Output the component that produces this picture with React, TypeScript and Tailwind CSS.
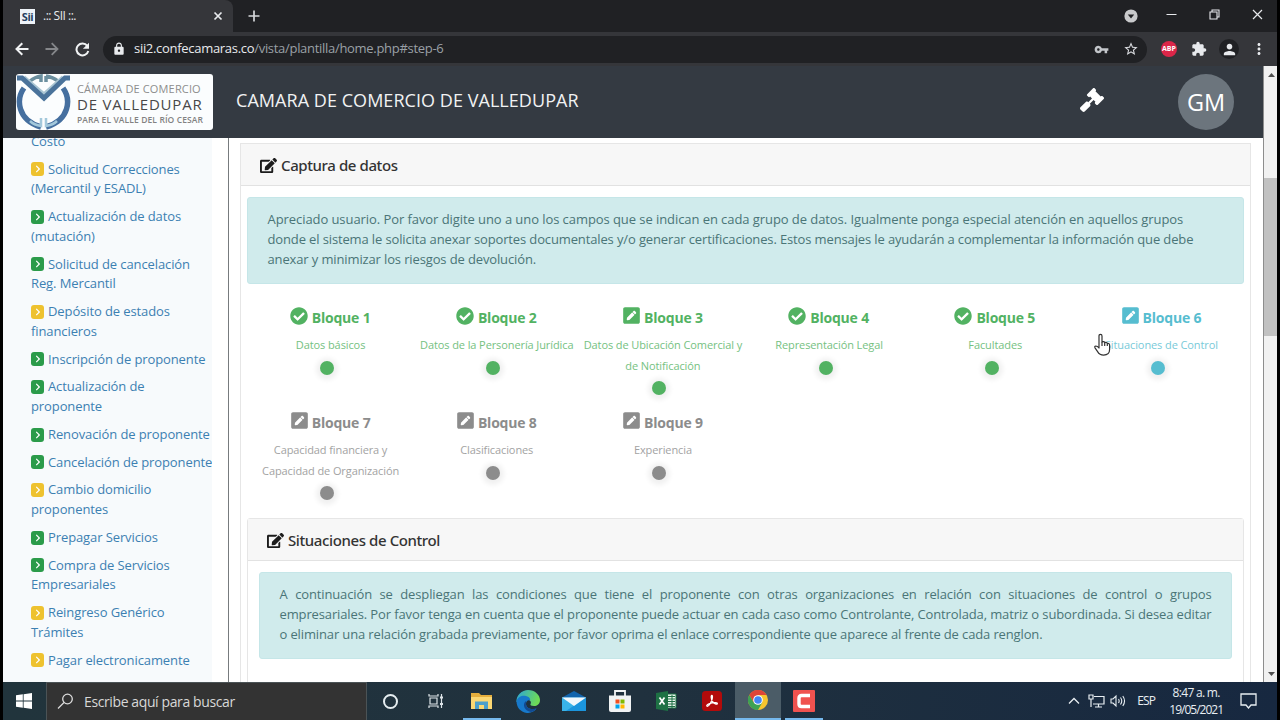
import React from 'react';
import { FaCheckCircle, FaChevronRight, FaEdit, FaGavel, FaPenSquare } from 'react-icons/fa';
import { MdExtension, MdLock, MdPerson, MdStarBorder, MdVpnKey, MdMoreVert } from 'react-icons/md';

const menu = [
  { color: 'bg-[#eec22f]', lines: ['Solicitud Correcciones', '(Mercantil y ESADL)'] },
  { color: 'bg-[#2b9b4a]', lines: ['Actualización de datos', '(mutación)'] },
  { color: 'bg-[#2b9b4a]', lines: ['Solicitud de cancelación', 'Reg. Mercantil'] },
  { color: 'bg-[#eec22f]', lines: ['Depósito de estados', 'financieros'] },
  { color: 'bg-[#2b9b4a]', lines: ['Inscripción de proponente'] },
  { color: 'bg-[#2b9b4a]', lines: ['Actualización de', 'proponente'] },
  { color: 'bg-[#2b9b4a]', lines: ['Renovación de proponente'] },
  { color: 'bg-[#2b9b4a]', lines: ['Cancelación de proponente'] },
  { color: 'bg-[#eec22f]', lines: ['Cambio domicilio', 'proponentes'] },
  { color: 'bg-[#2b9b4a]', lines: ['Prepagar Servicios'] },
  { color: 'bg-[#2b9b4a]', lines: ['Compra de Servicios', 'Empresariales'] },
  { color: 'bg-[#eec22f]', lines: ['Reingreso Genérico', 'Trámites'] },
  { color: 'bg-[#eec22f]', lines: ['Pagar electronicamente'] },
];

const blocks = [
  { n: 1, icon: 'check', tone: 'text-[#52b262]', desc: ['Datos básicos'] },
  { n: 2, icon: 'check', tone: 'text-[#52b262]', desc: ['Datos de la Personería Jurídica'] },
  { n: 3, icon: 'pen', tone: 'text-[#52b262]', desc: ['Datos de Ubicación Comercial y', 'de Notificación'] },
  { n: 4, icon: 'check', tone: 'text-[#52b262]', desc: ['Representación Legal'] },
  { n: 5, icon: 'check', tone: 'text-[#52b262]', desc: ['Facultades'] },
  { n: 6, icon: 'pen', tone: 'text-[#56bdd0]', desc: ['Situaciones de Control'] },
  { n: 7, icon: 'pen', tone: 'text-[#8c8c8c]', desc: ['Capacidad financiera y', 'Capacidad de Organización'] },
  { n: 8, icon: 'pen', tone: 'text-[#8c8c8c]', desc: ['Clasificaciones'] },
  { n: 9, icon: 'pen', tone: 'text-[#8c8c8c]', desc: ['Experiencia'] },
];

function BrowserBar() {
  return (
    <div className="h-[66px] bg-[#202124] text-[#e8eaed]">
      <div className="flex h-8 items-center">
        <div className="flex h-8 w-[230px] items-center rounded-tr-lg bg-[#35363a] pl-[17px] pr-[9px]">
          <div className="flex h-[15px] w-[15px] items-center justify-center bg-[#eef3f8] text-[11px] font-bold leading-none tracking-[-0.5px] text-[#25405e]">Sii</div>
          <span className="ml-2 flex-1 text-[12px] tracking-[-0.5px]">.:: SII ::.</span>
          <svg width="12" height="12" viewBox="0 0 12 12" stroke="#e8eaed" strokeWidth="1.700">
            <path d="M2.500 2.500l7 7M9.500 2.500l-7 7" />
          </svg>
        </div>
        <svg className="ml-[15px]" width="12" height="12" viewBox="0 0 12 12" stroke="#d5d7da" strokeWidth="1.700">
          <path d="M6 .5v11M.5 6h11" />
        </svg>
        <div className="ml-auto flex items-center">
          <svg className="mr-[28px]" width="14" height="14" viewBox="0 0 14 14">
            <circle cx="7" cy="7" r="6.600" fill="#c9cacc" />
            <path d="M3.800 5.400h6.400L7 9.400z" fill="#202124" />
          </svg>
          <svg className="-mt-1 mr-[32px]" width="11" height="11" viewBox="0 0 11 11" stroke="#e8eaed">
            <path d="M.5 5.500h10" />
          </svg>
          <svg className="-mt-1 mr-[32px]" width="11" height="11" viewBox="0 0 11 11" fill="none" stroke="#e8eaed" strokeWidth="1.100">
            <path d="M1 3h7v7H1zM3 3V1h7v7H8" />
          </svg>
          <svg className="-mt-1 mr-[14px]" width="11" height="11" viewBox="0 0 11 11" stroke="#e8eaed" strokeWidth="1.200">
            <path d="M1 1l9 9M10 1l-9 9" />
          </svg>
        </div>
      </div>
      <div className="flex h-[34px] items-center bg-[#35363a]">
        <svg className="ml-[12px]" width="14" height="14" viewBox="0 0 14 14" fill="none" stroke="#f1f3f4" strokeWidth="2">
          <path d="M13.500 7H2M7.300 1.200L1.500 7l5.800 5.800" />
        </svg>
        <svg className="ml-[16px]" width="14" height="14" viewBox="0 0 14 14" fill="none" stroke="#85878a" strokeWidth="1.800">
          <path d="M.5 7H12M6.700 1.200L12.500 7l-5.800 5.800" />
        </svg>
        <svg className="ml-[16px]" width="15" height="15" viewBox="0 0 15 15" fill="none" stroke="#f1f3f4" strokeWidth="2">
          <path d="M12.300 3.800A6 6 0 1 0 13.300 9" /><path d="M14 .7v6.100H7.900z" fill="#f1f3f4" stroke="none" />
        </svg>
        <div className="ml-[13px] flex h-[27px] w-[1044px] items-center rounded-full bg-[#202124] pl-[9px] pr-[8px]">
          <MdLock size={14} />
          <span className="ml-[8px] flex-1 text-[13px] tracking-[-0.3px] text-[#9aa0a6]"><span className="text-[#e8eaed]">sii2.confecamaras.co</span>/vista/plantilla/home.php#step-6</span>
          <MdVpnKey size={15} className="mr-[14px] text-[#c3c6ca]" />
          <MdStarBorder size={16} className="text-[#dadce0]" />
        </div>
        <div className="ml-[14px] flex h-4 w-4 items-center justify-center rounded-full bg-[#dc2649] text-[7px] font-bold text-white">ABP</div>
        <MdExtension className="ml-[14px]" size={16} />
        <div className="ml-[12px] flex h-[20px] w-[20px] items-center justify-center rounded-full bg-[#202124]">
          <MdPerson size={17} />
        </div>
        <MdMoreVert className="ml-[11px]" size={18} />
      </div>
    </div>
  );
}

function Logo() {
  return (
    <div className="flex h-14 w-[197px] overflow-hidden rounded-[3px] bg-[#fbfdfe]">
      <svg width="56" height="56" viewBox="0 0 56 56" fill="none">
        <path d="M8 14C0 25 1 46 25 53M47 14c8 11 7 32-17 39" stroke="#456f9f" strokeWidth="5.500" />
        <path d="M14 7q5-4 11-5v6M30 2q7 1 12 5M30 2v6" stroke="#6b8f9f" strokeWidth="3.500" />
        <path d="M8 3l20 17L47 3" stroke="#a9c5d3" strokeWidth="3.500" />
        <path d="M1 4h5l22 20L49 4h5" stroke="#4a739b" strokeWidth="5" />
        <path d="M25 44v8q-7-1-11-5M30 44v8q7-1 11-5" stroke="#a3c8db" strokeWidth="2.500" />
      </svg>
      <div className="flex flex-1 flex-col whitespace-nowrap pl-[5px] pt-[8px]">
        <div className="text-[11px] leading-[14px] tracking-[0.150px] text-[#8d8d8d]">CÁMARA DE COMERCIO</div>
        <div className="pt-px text-[15px] leading-[15px] tracking-[0.8px] text-[#484848]">DE VALLEDUPAR</div>
        <div className="pt-px text-[8.500px] font-semibold leading-[13px] tracking-[0.1px] text-[#828282]">PARA EL VALLE DEL RÍO CESAR</div>
      </div>
    </div>
  );
}

function Header() {
  return (
    <div className="flex h-[72px] w-[1260px] items-center bg-[#343a42] pl-[13px]">
      <Logo />
      <h1 className="ml-[23px] -mt-1 flex-1 whitespace-nowrap text-[18px] tracking-[0.05px] text-[#f1f2f3]">CAMARA DE COMERCIO DE VALLEDUPAR</h1>
      <FaGavel className="mr-[74px] -mt-1 text-white" size={24} />
      <div className="mr-[29px] flex h-14 w-14 items-center justify-center rounded-full bg-[#6c757d] pt-[2px] text-[23.500px] text-white">GM</div>
    </div>
  );
}

function Sidebar() {
  return (
    <div className="w-[226px] shrink-0 overflow-hidden border-r border-[#777b7e] bg-white">
      <div className="h-full w-[209px] overflow-hidden bg-[#f7fafc] pl-7">
        <ul className="-mt-[6.200px] flex flex-col gap-2 whitespace-nowrap text-[13px] leading-[19.750px] tracking-[-0.1px] text-[#3c80b2]">
          <li>Costo</li>
          {menu.map((m) => (
            <li key={m.lines[0]}>
              <div className="flex items-center">
                <span className={`mr-1 flex h-[14px] w-[13px] shrink-0 items-center justify-center rounded-[3px] ${m.color}`}>
                  <FaChevronRight size={8} className="text-white" />
                </span>
                {m.lines[0]}
              </div>
              {m.lines[1] && <div>{m.lines[1]}</div>}
            </li>
          ))}
        </ul>
      </div>
    </div>
  );
}

function Steps() {
  return (
    <div className="mt-[20px] grid grid-cols-6 whitespace-nowrap">
      {blocks.map((b) => (
        <div key={b.n} className={`flex h-[105px] flex-col items-center ${b.tone}`}>
          <div className="flex h-[27px] items-center text-[14px] font-bold tracking-[-0.2px]">
            {b.icon === 'check' ? <FaCheckCircle size={18} className="-mt-1 mr-1" /> : <FaPenSquare size={19} className="-mt-1 mr-[3px]" />}
            Bloque {b.n}
          </div>
          <div className="pl-px pt-[4px] text-center text-[11px] leading-[20.500px] tracking-[-0.1px] opacity-80">
            {b.desc.map((d) => <div key={d}>{d}</div>)}
          </div>
          <div className="mr-[6px] mt-[5px] h-[14px] w-[14px] rounded-full bg-current shadow-[0_1px_5px_4px_#f1f1f1]" />
        </div>
      ))}
    </div>
  );
}

function CardTitle({ children }: { children: React.ReactNode }) {
  return (
    <div className="flex h-[42px] items-center gap-1 border-b border-[#e2e2e2] bg-[#f7f7f7] pl-[19px] pt-[2px] font-['Noto_Sans',sans-serif] text-[15px] font-medium tracking-[-0.4px] text-[#333]">
      <FaEdit size={17} className="text-[#1c1c1c]" />
      <span>{children}</span>
    </div>
  );
}

function Content() {
  return (
    <div className="relative flex-1 overflow-hidden pl-[11px] pt-[5px]">
      <div className="h-[600px] w-[1011px] border border-[#e6e6e6]">
        <CardTitle>Captura de datos</CardTitle>
        <div className="px-[6px] pt-[11px]">
          <div className="h-[87px] whitespace-nowrap rounded-[3px] border border-[#c5e6e8] bg-[#d0ebec] pl-[19.500px] pt-[12px] text-[13px] leading-[19.750px] tracking-[-0.13px] text-[#4a7577]">
            <div className="tracking-[-0.07px]">Apreciado usuario. Por favor digite uno a uno los campos que se indican en cada grupo de datos. Igualmente ponga especial atención en aquellos grupos</div>
            <div>donde el sistema le solicita anexar soportes documentales y/o generar certificaciones. Estos mensajes le ayudarán a complementar la información que debe</div>
            <div>anexar y minimizar los riesgos de devolución.</div>
          </div>
          <Steps />
          <div className="mt-[4px] h-[300px] rounded-t-[3px] border border-[#e6e6e6]">
            <CardTitle>Situaciones de Control</CardTitle>
            <div className="mx-[11px] mt-[11px] h-[87px] whitespace-nowrap rounded-[3px] border border-[#c5e6e8] bg-[#d0ebec] px-[19.500px] pt-[12px] text-[13px] leading-[19.750px] tracking-[-0.13px] text-[#4a7577]">
              <div className="[text-align-last:justify]">A continuación se despliegan las condiciones que tiene el proponente con otras organizaciones en relación con situaciones de control o grupos</div>
              <div className="[text-align-last:justify]">empresariales. Por favor tenga en cuenta que el proponente puede actuar en cada caso como Controlante, Controlada, matriz o subordinada. Si desea editar</div>
              <div>o eliminar una relación grabada previamente, por favor oprima el enlace correspondiente que aparece al frente de cada renglon.</div>
            </div>
          </div>
        </div>
      </div>
      {/* hand cursor over block 6 */}
      <svg className="absolute left-[864px] top-[195px]" width="20" height="24" viewBox="0 0 20 24" fill="#fff" stroke="#333" strokeWidth="1.200" strokeLinejoin="round">
        <path d="M6 14V3q0-1.700 1.500-1.700T9 3v6q2.300-1 2.700.6 2.200-.7 2.600.9 2.300-.5 2.300 1.600v4.500q0 5.500-6 5.500-4 0-6-3.500L2 14.800q-.8-1.700.8-1.800Q4.500 13 6 15z" />
        <path d="M9 9v4M11.700 9.800V13M14.300 10.700V13" />
      </svg>
    </div>
  );
}

function Scrollbar() {
  return (
    <div className="flex w-[14px] shrink-0 flex-col items-center justify-between border-l border-[#8d8d8d] bg-[#f1f1f1]">
      <svg width="13" height="14" viewBox="0 0 13 14"><path d="M4 11h7L7.500 7z" fill="#505050" /></svg>
      <div className="mb-auto mt-[98px] h-[158px] w-full bg-[#c1c1c1]" />
      <svg width="13" height="14" viewBox="0 0 13 14"><path d="M4 4h7L7.500 8z" fill="#505050" /></svg>
    </div>
  );
}

function Slot({ children, bar }: { children: React.ReactNode; bar?: boolean }) {
  return (
    <div className="relative flex h-full w-[46px] items-center justify-center">
      {children}
      {bar && <div className="absolute bottom-0 h-[2px] w-[38px] bg-[#76b9ed]" />}
    </div>
  );
}

function Taskbar() {
  return (
    <div className="flex h-[38px] items-center bg-linear-to-r from-[#21343c] via-[#20313e] to-[#172840] text-[#e8eef2]">
      <div className="flex h-full w-[43px] items-center justify-center pr-[2px]">
        <svg width="16" height="16" viewBox="0 0 16 16" fill="#fff">
          <path d="M0 2.300l6.800-1v6.300H0zM7.600 1.200L16 0v7.600H7.600zM0 8.400h6.800v6.300L0 13.700zM7.600 8.400H16V16l-8.400-1.200z" />
        </svg>
      </div>
      <div className="flex h-full w-[321px] items-center border-x border-t border-[#4b5356] bg-[#333] pl-[10px]">
        <svg width="17" height="17" viewBox="0 0 17 17" fill="none" stroke="#ddd" strokeWidth="1.300">
          <circle cx="10.500" cy="6" r="4.800" /><path d="M7 9.500L1 15.500" />
        </svg>
        <span className="ml-[10px] text-[14px] tracking-[-0.39px] text-[#d8d8d8]">Escribe aquí para buscar</span>
      </div>
      <Slot><div className="h-[15px] w-[15px] rounded-full border-2 border-[#e5edf0]" /></Slot>
      <Slot>
        <svg width="17" height="16" viewBox="0 0 17 16" fill="none" stroke="#dde4e8" strokeWidth="1.200">
          <path d="M1 1v2h9V1M1 15v-2h9v2M2 5h7v6H2zM13.500 1v14" /><path d="M12 4.500h3M12 11h3" strokeWidth="2" />
        </svg>
      </Slot>
      <Slot bar>
        <svg width="22" height="18" viewBox="0 0 22 18">
          <path d="M0 1h8l2 2h11v14H0z" fill="#e5ae3d" /><path d="M0 5h21v12H0z" fill="#fbd773" />
          <path d="M4 17V9.500h13V17h-4v-4H8v4z" fill="#4c9fcb" />
        </svg>
      </Slot>
      <Slot>
        <svg width="24" height="23" viewBox="0 0 24 23">
          <defs>
            <linearGradient id="edge" x1="0" y1="0" x2="1" y2=".3"><stop stopColor="#2aa4dc" /><stop offset="1" stopColor="#6edb56" /></linearGradient>
          </defs>
          <path d="M.500 12C0 5 6 0 12 0c7 0 12 5 12 10 0 4-3 6-6 6-3 0-4-1-3.500-2 1-1 .5-4-3-4.500C7 9 3 11 .5 12z" fill="url(#edge)" />
          <path d="M.500 11C2 6 7 5 10 6c4 1 4.500 3.500 4 4.500-2-1-4 1-4 3.500 0 4 5 6.500 10.500 4.500C18 22 14 23 11 23 4 22 .5 17 .5 11z" fill="#1779cb" />
          <path d="M10 11c-4 3-2 10 5 11 2-.5 4-1.500 5.500-3.500C15 20 10 18 10 14z" fill="#124a91" />
        </svg>
      </Slot>
      <Slot>
        <svg width="24" height="21" viewBox="0 0 24 21">
          <path d="M0 6.500L12 0l12 6.500V20H0z" fill="#1264ad" />
          <path d="M0 6.500h24V20H0z" fill="#39b3e8" />
          <path d="M24 6.500V20H4z" fill="#1b95dd" /><path d="M0 6.500h24L12 15z" fill="#f2f7fb" />
        </svg>
      </Slot>
      <Slot>
        <svg width="22" height="23" viewBox="0 0 22 23">
          <path d="M6 6V1h10v5" fill="none" stroke="#f1f3f4" strokeWidth="1.800" /><path d="M0 5.500h22V20q0 2-2 2H2q-2 0-2-2z" fill="#f1f3f4" />
          <path d="M6.500 9.500h4v4h-4z" fill="#f25022" /><path d="M11.500 9.500h4v4h-4z" fill="#7fba00" />
          <path d="M6.500 14.500h4v4h-4z" fill="#00a4ef" /><path d="M11.500 14.500h4v4h-4z" fill="#ffb900" />
        </svg>
      </Slot>
      <Slot>
        <svg width="21" height="20" viewBox="0 0 21 20">
          <path d="M10 3h10v14H10z" fill="#e9f3ec" stroke="#1e7144" />
          <path d="M12 5.500h7M12 8h7M12 10.500h7M12 13h7M12 15.500h7M16 4v13" stroke="#1e7144" />
          <path d="M0 2l12-2v20L0 18z" fill="#1e7144" /><path d="M3.500 6.500l5 7M8.500 6.500l-5 7" stroke="#fff" strokeWidth="1.700" />
        </svg>
      </Slot>
      <Slot>
        <svg width="20" height="20" viewBox="0 0 20 20">
          <rect width="20" height="20" rx="3.500" fill="#b30b0b" />
          <path d="M9.800 4.500c1.200 0 .6 4-1 7-1.300 2.500-3 4-3.800 3.700-1-.5 1-2.700 5-3.400 3-.5 5.500-.2 5.400.8-.2 1.200-3.400.3-5-2.200-1.200-2-1.600-5.900-.6-5.900z" fill="none" stroke="#fff" strokeWidth="1.300" />
        </svg>
      </Slot>
      <div className="flex h-full w-[46px] items-center justify-center border-b-2 border-[#76b9ed] bg-[#4b5c67]">
        <svg width="20" height="20" viewBox="0 0 20 20">
          <circle cx="10" cy="10" r="10" fill="#f7c52f" />
          <path d="M1.300 5A10 10 0 0 1 18.700 5H10L5.700 12.500z" fill="#df4538" />
          <path d="M1.300 5A10 10 0 0 0 10 20l4.300-7.500H5.700z" fill="#3da253" />
          <circle cx="10" cy="10" r="4.800" fill="#fff" /><circle cx="10" cy="10" r="3.800" fill="#4285f4" />
        </svg>
      </div>
      <Slot bar>
        <svg width="22" height="22" viewBox="0 0 22 22">
          <rect width="22" height="22" rx="1" fill="#f0524f" />
          <path d="M17 5.500H8.500Q6 5.500 6 8v6q0 2.500 2.500 2.500H17" fill="none" stroke="#fff" strokeWidth="3.400" />
        </svg>
      </Slot>
      <div className="ml-auto flex items-center pr-[20px]">
        <svg width="12" height="8" viewBox="0 0 12 8" fill="none" stroke="#e8eef2" strokeWidth="1.300"><path d="M1 6.500l5-5 5 5" /></svg>
        <svg className="ml-[8px]" width="17" height="14" viewBox="0 0 17 14" fill="none" stroke="#e8eef2" strokeWidth="1.200">
          <path d="M6 2.500h10v7.500H5M10.500 10v3M7 13h7M1 1h4v4H1zM3 5v8" />
        </svg>
        <svg className="ml-[5px]" width="16" height="14" viewBox="0 0 16 14" fill="none" stroke="#e8eef2" strokeWidth="1.100">
          <path d="M1 5h2l3-3v10L3 9H1zM8.500 5q1.300 2 0 4M10.500 3.500q2.500 3.500 0 7M12.800 2q3.500 5 0 10" />
        </svg>
        <span className="ml-[11px] text-[12px] tracking-[-0.8px]">ESP</span>
        <div className="ml-[14px] text-center text-[12px] leading-[17px] tracking-[-1px]">
          <div className="tracking-[-0.7px]">8:47 a. m.</div>
          <div>19/05/2021</div>
        </div>
        <svg className="ml-[17px]" width="17" height="16" viewBox="0 0 17 16" fill="none" stroke="#e8eef2" strokeWidth="1.300">
          <path d="M1 1h15v11h-5l-2.500 3L6 12H1z" />
        </svg>
      </div>
    </div>
  );
}

export default function App() {
  return (
    <div className="h-[720px] w-[1280px] overflow-hidden bg-black px-[3px] font-['Open_Sans','Noto_Sans',sans-serif]">
      <BrowserBar />
      <div className="flex h-[616px] bg-white">
        <div className="flex w-[1260px] flex-col">
          <Header />
          <div className="flex h-[544px]">
            <Sidebar />
            <Content />
          </div>
        </div>
        <Scrollbar />
      </div>
      <Taskbar />
    </div>
  );
}
